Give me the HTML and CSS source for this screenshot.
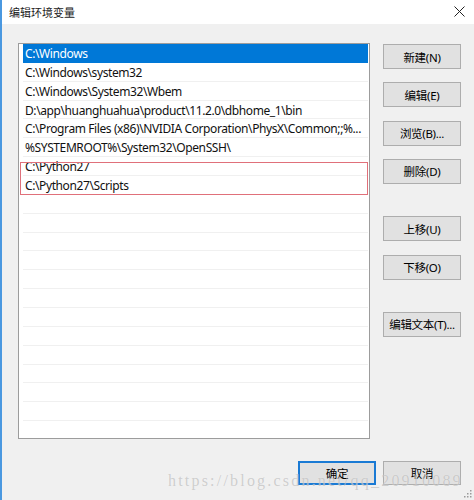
FILE: index.html
```html
<!DOCTYPE html>
<html lang="zh-CN">
<head>
<meta charset="utf-8">
<title>编辑环境变量</title>
<link rel="stylesheet" href="styles.css">
</head>
<body>
<div class="window">
  <div class="titlebar">
    <span class="title">编辑环境变量</span>
    <svg class="close" width="11" height="11" viewBox="0 0 11 11"><path d="M0.5 0.5 L10.5 10.5 M10.5 0.5 L0.5 10.5" stroke="#222" stroke-width="1" fill="none"/></svg>
  </div>
  <div class="body">
    <div class="main">
      <div class="list">
        <div class="row selected">C:\Windows</div>
        <div class="row">C:\Windows\system32</div>
        <div class="row">C:\Windows\System32\Wbem</div>
        <div class="row">D:\app\huanghuahua\product\11.2.0\dbhome_1\bin</div>
        <div class="row">C:\Program Files (x86)\NVIDIA Corporation\PhysX\Common;;%...</div>
        <div class="row">%SYSTEMROOT%\System32\OpenSSH\</div>
        <div class="row">C:\Python27</div>
        <div class="row">C:\Python27\Scripts</div>
        <div class="row"></div>
        <div class="row"></div>
        <div class="row"></div>
        <div class="row"></div>
        <div class="row"></div>
        <div class="row"></div>
        <div class="row"></div>
        <div class="row"></div>
        <div class="row"></div>
        <div class="row"></div>
        <div class="row"></div>
        <div class="row"></div>
        <div class="row"></div>
        <div class="row"></div>
        <div class="mark"></div>
      </div>
      <div class="side">
        <button class="btn">新建(N)</button>
        <button class="btn">编辑(E)</button>
        <button class="btn">浏览(B)...</button>
        <button class="btn">删除(D)</button>
        <button class="btn group">上移(U)</button>
        <button class="btn">下移(O)</button>
        <button class="btn group">编辑文本(T)...</button>
      </div>
    </div>
    <div class="footer">
      <button class="btn primary">确定</button>
      <button class="btn">取消</button>
    </div>
  </div>
  <div class="watermark">https://blog.csdn.net/qq_20910089</div>
  <svg class="grip" width="8" height="8" viewBox="0 0 8 8">
    <rect x="6" y="0" width="1.5" height="1.5" fill="#9a9a9a"/>
    <rect x="3" y="3" width="1.5" height="1.5" fill="#9a9a9a"/>
    <rect x="6" y="3" width="1.5" height="1.5" fill="#9a9a9a"/>
    <rect x="0" y="6" width="1.5" height="1.5" fill="#9a9a9a"/>
    <rect x="3" y="6" width="1.5" height="1.5" fill="#9a9a9a"/>
    <rect x="6" y="6" width="1.5" height="1.5" fill="#9a9a9a"/>
  </svg>
</div>
</body>
</html>
```
FILE: styles.css
```css
* { box-sizing: border-box; }
html, body { margin: 0; padding: 0; }
body {
  width: 474px;
  height: 500px;
  overflow: hidden;
  font-family: "Noto Sans", "Noto Sans CJK SC", sans-serif;
  font-size: 12px;
  color: #000;
}
.window {
  position: relative;
  width: 474px;
  height: 500px;
  border-left: 2px solid #4a98e0;
  background: #f0f0f0;
  display: flex;
  flex-direction: column;
}
.titlebar {
  height: 24px;
  background: #fff;
  display: flex;
  align-items: center;
  padding-left: 7px;
  padding-right: 9px;
}
.title {
  font-family: "Noto Sans CJK SC", sans-serif;
  font-size: 11px;
  color: #222;
  margin-top: -1px;
}
.close { margin-left: auto; margin-top: -2px; }
.body {
  flex: 1;
  padding: 19px 13px 0 16px;
  display: flex;
  flex-direction: column;
}
.main {
  display: flex;
  gap: 13px;
}
.list {
  position: relative;
  width: 352px;
  height: 396px;
  border: 1px solid #9c9c9c;
  background: #fff;
  padding: 0 1px 0 4px;
  overflow: hidden;
}
.row {
  height: 18.86px;
  line-height: 17.86px;
  padding-top: 1px;
  border-bottom: 1px solid #f0f0f0;
  padding-left: 2px;
  white-space: nowrap;
  overflow: hidden;
  color: #111;
  letter-spacing: -0.4px;
}
.row.selected {
  background: #0078d7;
  color: #fff;
  border-bottom-color: #0078d7;
}
.mark {
  position: absolute;
  left: 1px;
  top: 118px;
  width: 348px;
  height: 33px;
  border: 1px solid #e0707a;
}
.side {
  width: 78px;
  display: flex;
  flex-direction: column;
  gap: 13.33px;
  padding-top: 1px;
}
.btn {
  height: 25px;
  width: 78px;
  background: #e1e1e1;
  border: 1px solid #adadad;
  font-family: "Noto Sans", "Noto Sans CJK SC", sans-serif;
  font-size: 11.5px;
  letter-spacing: -0.3px;
  color: #000;
  padding: 0;
  margin: 0;
}
.btn.group { margin-top: 19px; }
.footer {
  display: flex;
  justify-content: flex-end;
  gap: 7px;
  margin-top: 22px;
}
.footer .btn { height: 24px; }
.btn.primary { border: 2px solid #1a7ad4; }
.watermark {
  position: absolute;
  left: 166px;
  top: 472px;
  font-family: "Liberation Serif", serif;
  font-size: 16px;
  letter-spacing: 2.2px;
  color: rgba(170, 170, 170, 0.55);
  text-shadow: 0 0 1px rgba(255,255,255,0.6);
  white-space: nowrap;
  pointer-events: none;
}
.grip {
  position: absolute;
  right: 2px;
  bottom: 2px;
}
```
